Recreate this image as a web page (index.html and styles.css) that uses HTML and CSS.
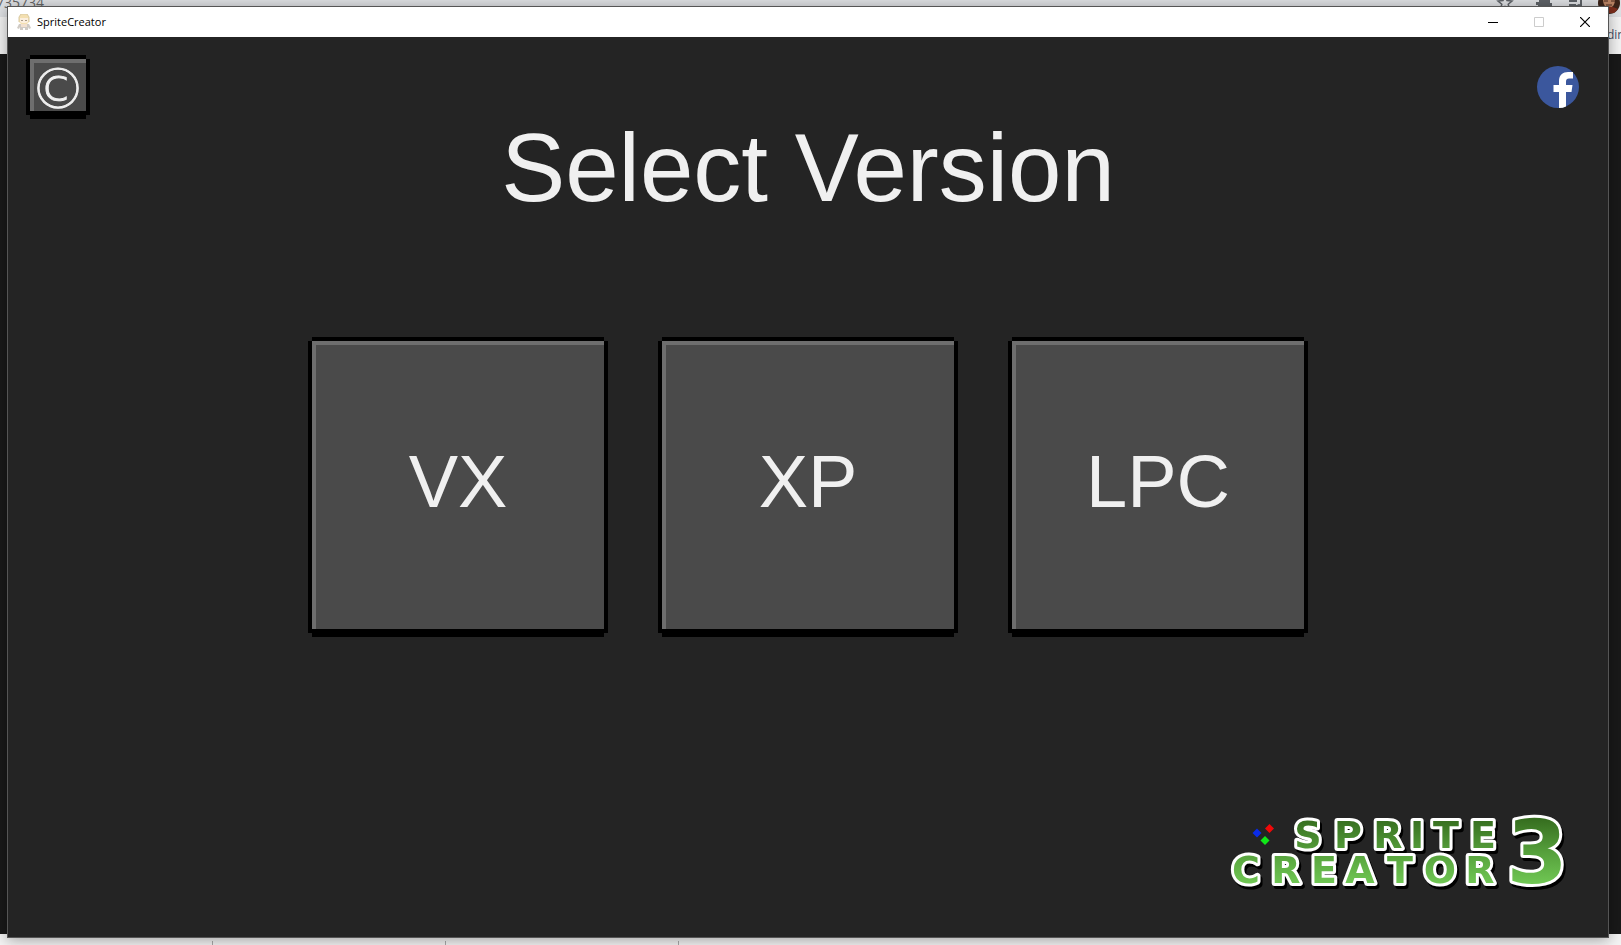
FILE: index.html
```html
<!DOCTYPE html>
<html lang="en">
<head>
<meta charset="utf-8">
<title>SpriteCreator</title>
<link rel="stylesheet" href="styles.css">
</head>
<body>
<div class="desktop">
  <div class="browser">
    <div class="browser-bar">
      <span class="address">735734</span>
      <svg class="browser-icons" width="128" height="17" viewBox="0 0 128 17" aria-hidden="true">
        <path d="M12 -4l2 4.500 5 .5-3.800 3.200 1.200 4.800-4.400-2.700-4.400 2.700 1.200-4.800L5 1l5-.5z" fill="none" stroke="#5f6368" stroke-width="1.500"/>
        <path d="M46 0h11v3h2v3h-2v3h-4a2 2 0 0 0-4 0h-4V5h-2V2h3z" fill="#5f6368"/>
        <path d="M76 1h8M76 5h7M88 0v6M82 6h4" fill="none" stroke="#5f6368" stroke-width="2"/>
        <circle cx="86" cy="6" r="2" fill="#5f6368"/>
        <circle cx="116" cy="3" r="11" fill="#3b2318"/>
        <ellipse cx="116" cy="0" rx="6" ry="8" fill="#b98262"/>
        <path d="M107 9q9-5 18 0l-4 4h-9z" fill="#7d2e1c"/>
        <path d="M111 1h4M118 1h4M113 5h6" stroke="#4a2a1e" stroke-width="1"/>
      </svg>
    </div>
    <div class="bookmarks"><span class="bookmark">din</span></div>
    <div class="page"></div>
    <div class="taskbar"><i class="tab"></i><i class="tab"></i><i class="tab"></i></div>
  </div>

  <div class="window">
    <header class="titlebar">
      <svg class="app-icon" width="16" height="16" viewBox="0 0 16 16" aria-hidden="true">
        <path d="M3 3l2-3h6l2 3v5l-2 2H5L3 8z" fill="#f3dfb0"/>
        <path d="M4 4h8v4l-2 1H6L4 8z" fill="#fbeedd"/>
        <path d="M3 10h10l2 4-2 1-1-2v3H9v-2H7v2H4v-3l-1 2-2-1z" fill="#cfcac4"/>
        <path d="M5 10h6v3H5z" fill="#f1e0cf"/>
        <path d="M5 6h2v1H5zM9 6h2v1H9z" fill="#a99b86"/>
        <path d="M3 8V3l2-3h6l2 3v5" fill="none" stroke="#d8c9a2" stroke-width="1"/>
      </svg>
      <span class="app-name">SpriteCreator</span>
      <div class="controls">
        <button class="control" aria-label="Minimize"><svg width="10" height="10" viewBox="0 0 10 10"><path d="M0 5.500h10" stroke="#000"/></svg></button>
        <button class="control" aria-label="Maximize" disabled><svg width="10" height="10" viewBox="0 0 10 10"><path d="M.5.5h9v9h-9z" fill="none" stroke="#ccc"/></svg></button>
        <button class="control" aria-label="Close"><svg width="10" height="10" viewBox="0 0 10 10"><path d="M0 0l10 10M10 0L0 10" stroke="#000" stroke-width="1.200"/></svg></button>
      </div>
    </header>

    <main class="client">
      <div class="toolbar">
        <button class="block small" aria-label="Copyright">©</button>
        <a class="facebook" href="#" aria-label="Facebook">
          <svg width="42" height="42" viewBox="0 0 42 42">
            <circle cx="21" cy="21" r="21" fill="#3b579d"/>
            <path d="M22 42V26h-5.500v-7H22v-4c0-6 4-9 9-9h5v6.500h-4c-2 0-3 1-3 3V19h6.500l-1 7H29v14.500q-3 1.500-7 1.500z" fill="#fff"/>
          </svg>
        </a>
      </div>
      <h1 class="heading">Select Version</h1>
      <div class="versions">
        <button class="block large">VX</button>
        <button class="block large">XP</button>
        <button class="block large">LPC</button>
      </div>
      <svg class="logo" width="350" height="78" viewBox="1228 814 350 78" role="img" aria-label="Sprite Creator 3">
        <defs>
          <linearGradient id="green" gradientUnits="userSpaceOnUse" x1="0" y1="820" x2="0" y2="883">
            <stop offset="0" stop-color="#376f20"/>
            <stop offset=".5" stop-color="#559f3b"/>
            <stop offset="1" stop-color="#6fc653"/>
          </linearGradient>
        </defs>
        <g class="logo-face">
          <text class="word" x="1308 1348 1388 1417 1446 1483" y="848">SPRITE</text>
          <text class="word" x="1246 1286 1324 1360 1400 1440 1480" y="883">CREATOR</text>
          <text class="numeral" x="1537" y="883">3</text>
        </g>
        <path d="M1257 828.500l4.500 4.500-4.500 4.500-4.500-4.500z" fill="#0a2be8"/>
        <path d="M1269.500 824l4.500 4.500-4.500 4.500-4.500-4.500z" fill="#f00808"/>
        <path d="M1265 836l4.500 4.500-4.500 4.500-4.500-4.500z" fill="#10e818"/>
      </svg>
    </main>
  </div>
</div>
</body>
</html>
```
FILE: styles.css
```css
* { box-sizing: border-box; }

body { margin: 0; }

button {
  margin: 0;
  padding: 0;
  border: 0;
  background: none;
}

svg { display: block; }

.desktop {
  display: grid;
  grid-template: minmax(0, 1fr) / minmax(0, 1fr);
  min-height: 100vh;
  overflow: hidden;
  font-family: "Open Sans", "Noto Sans", sans-serif;
}

.browser,
.window {
  grid-area: 1 / 1;
  display: flex;
  flex-direction: column;
}

.browser-bar {
  display: flex;
  justify-content: space-between;
  height: 17px;
  overflow: hidden;
  background: #dfe1e4;
}

.address {
  margin-left: -4px;
  font-size: 14px;
  line-height: 6px;
  color: #666;
}

.bookmarks {
  display: flex;
  justify-content: flex-end;
  height: 37px;
  overflow: hidden;
  background: #f4f4f4;
}

.bookmark {
  width: 14px;
  font-size: 12px;
  line-height: 36px;
  color: #444c66;
}

.page {
  flex: 1;
  background: #191919;
}

.taskbar {
  display: flex;
  align-items: flex-end;
  height: 11px;
  background: #f4f4f4;
}

.tab {
  width: 233px;
  height: 4px;
  border-right: 1px solid #aaa;
}

.tab:first-child { width: 213px; }

.window {
  margin: 6px 12px 7px 7px;
  border: 1px solid #555;
  background: #242424;
  box-shadow: 0 2px 14px rgba(0, 0, 0, .35);
}

.titlebar {
  display: flex;
  align-items: center;
  height: 30px;
  padding-left: 8px;
  gap: 5px;
  background: #fff;
}

.app-name {
  flex: 1;
  font-size: 11px;
  line-height: 28px;
  color: #000;
}

.controls { display: flex; }

.control {
  display: flex;
  align-items: center;
  justify-content: center;
  width: 46px;
  height: 28px;
}

.client {
  flex: 1;
  display: flex;
  flex-direction: column;
  align-items: center;
  color: #f0f0f0;
}

.toolbar {
  display: flex;
  align-items: center;
  justify-content: space-between;
  width: 100%;
  padding: 18px 29px 0 18px;
}

.block {
  border: solid #000;
  border-width: 4px 4px 8px;
  background: #4a4a4a;
  box-shadow: inset 4px 4px #6e6e6e;
  color: #f0f0f0;
  clip-path: polygon(4px 0, calc(100% - 4px) 0, calc(100% - 4px) 4px, 100% 4px, 100% calc(100% - 4px), calc(100% - 4px) calc(100% - 4px), calc(100% - 4px) 100%, 4px 100%, 4px calc(100% - 4px), 0 calc(100% - 4px), 0 4px, 4px 4px);
}

.small {
  display: flex;
  align-items: center;
  justify-content: center;
  width: 64px;
  height: 64px;
  padding-top: 8px;
  font: 200 56px/44px "DejaVu Sans", sans-serif;
  -webkit-text-stroke: 1px #f0f0f0;
}

.large {
  width: 300px;
  height: 300px;
  padding-bottom: 6px;
  font: 74px/80px "Liberation Sans", Arial, sans-serif;
}

.heading {
  margin: 0;
  font: 96px/98px "Liberation Sans", Arial, sans-serif;
}

.versions {
  display: flex;
  gap: 50px;
  margin-top: 120px;
}

.logo {
  align-self: flex-end;
  margin: auto 30px 45px 0;
}

.word,
.numeral {
  font-family: "DejaVu Sans", sans-serif;
  font-weight: bold;
  text-anchor: middle;
  paint-order: stroke;
  stroke-width: 6px;
  stroke-linejoin: round;
}

.word { font-size: 38px; }

.numeral { font-size: 88px; }

.logo-face {
  fill: url(#green);
  stroke: #fff;
  filter: drop-shadow(2px 3px 0 #000);
}
```
